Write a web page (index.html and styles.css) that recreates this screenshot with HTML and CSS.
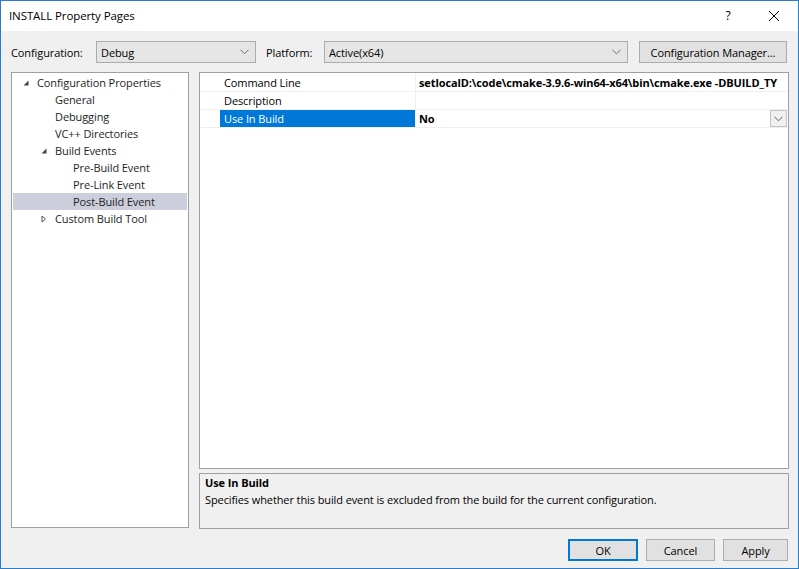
FILE: index.html
```html
<!DOCTYPE html>
<html lang="en">
<head>
    <meta charset="UTF-8">
    <title>INSTALL Property Pages</title>
    <link rel="stylesheet" href="styles.css">
</head>
<body>

<div class="window">
    <div class="titlebar">
        <span class="title">INSTALL Property Pages</span>
        <span class="help">?</span>
        <span class="close">
            <svg width="12" height="12" viewBox="0 0 12 12"><path d="M1 1L11 11M11 1L1 11" stroke="#000" stroke-width="1" fill="none"/></svg>
        </span>
    </div>

    <div class="toolbar">
        <span class="lbl cfg-lbl">Configuration:</span>
        <div class="combo combo-cfg">
            <span>Debug</span>
            <svg class="chev" width="9" height="6" viewBox="0 0 9 6"><path d="M0.5 0.8L4.5 4.8L8.5 0.8" stroke="#707070" fill="none"/></svg>
        </div>
        <span class="lbl plat-lbl">Platform:</span>
        <div class="combo combo-plat">
            <span>Active(x64)</span>
            <svg class="chev" width="9" height="6" viewBox="0 0 9 6"><path d="M0.5 0.8L4.5 4.8L8.5 0.8" stroke="#707070" fill="none"/></svg>
        </div>
        <button class="btn cfg-mgr">Configuration Manager...</button>
    </div>

    <div class="main">
        <div class="tree">
            <div class="node lvl0"><span class="tog"><svg width="6" height="6" viewBox="0 0 6 6"><path d="M5.5 0.5V5.5H0.5Z" fill="#444"/></svg></span>Configuration Properties</div>
            <div class="node lvl1"><span class="tog"></span>General</div>
            <div class="node lvl1"><span class="tog"></span>Debugging</div>
            <div class="node lvl1"><span class="tog"></span>VC++ Directories</div>
            <div class="node lvl1"><span class="tog"><svg width="6" height="6" viewBox="0 0 6 6"><path d="M5.5 0.5V5.5H0.5Z" fill="#444"/></svg></span>Build Events</div>
            <div class="node lvl2"><span class="tog"></span>Pre-Build Event</div>
            <div class="node lvl2"><span class="tog"></span>Pre-Link Event</div>
            <div class="node lvl2 selected"><span class="tog"></span>Post-Build Event</div>
            <div class="node lvl1"><span class="tog"><svg width="6" height="8" viewBox="0 0 6 8"><path d="M1 1V7L4.5 4Z" stroke="#555" fill="none"/></svg></span>Custom Build Tool</div>
        </div>

        <div class="right">
            <div class="grid">
                <div class="row">
                    <div class="gutter"></div>
                    <div class="name">Command Line</div>
                    <div class="value">setlocalD:\code\cmake-3.9.6-win64-x64\bin\cmake.exe -DBUILD_TY</div>
                </div>
                <div class="row">
                    <div class="gutter"></div>
                    <div class="name">Description</div>
                    <div class="value"></div>
                </div>
                <div class="row">
                    <div class="gutter"></div>
                    <div class="name active">Use In Build</div>
                    <div class="value">
                        <span>No</span>
                        <span class="drop">
                            <svg width="9" height="6" viewBox="0 0 9 6"><path d="M0.5 0.8L4.5 4.8L8.5 0.8" stroke="#606060" fill="none"/></svg>
                        </span>
                    </div>
                </div>
            </div>
            <div class="desc">
                <div class="desc-title">Use In Build</div>
                <div class="desc-text">Specifies whether this build event is excluded from the build for the current configuration.</div>
            </div>
        </div>
    </div>

    <div class="footer">
        <button class="btn dlg ok">OK</button>
        <button class="btn dlg cancel">Cancel</button>
        <button class="btn dlg apply">Apply</button>
    </div>
</div>

</body>
</html>
```

FILE: styles.css
```css
html, body {
    margin: 0;
    padding: 0;
}
body {
    font-family: "Open Sans", "Noto Sans", sans-serif;
    font-size: 11px;
    letter-spacing: -0.1px;
    color: #000;
    background: #f0f0f0;
}
.window {
    width: 799px;
    height: 569px;
    box-sizing: border-box;
    border: 1px solid #2b7bc6;
    background: #f0f0f0;
    display: flex;
    flex-direction: column;
}
.titlebar {
    height: 30px;
    background: #fff;
    display: flex;
    align-items: center;
    padding-left: 8px;
    padding-bottom: 1px;
    box-sizing: border-box;
}
.title {
    flex: 1;
    font-size: 11.5px;
}
.help {
    width: 46px;
    text-align: center;
    font-size: 12px;
}
.close {
    width: 46px;
    display: flex;
    justify-content: center;
    margin-right: 1px;
}
.toolbar {
    display: flex;
    align-items: center;
    margin-top: 10px;
    height: 22px;
    padding-left: 10px;
}
.lbl {
    white-space: nowrap;
}
.cfg-lbl {
    width: 85px;
}
.plat-lbl {
    width: 58px;
    margin-left: 10px;
}
.combo {
    height: 22px;
    box-sizing: border-box;
    border: 1px solid #acacac;
    background: #e5e5e5;
    display: flex;
    align-items: center;
    justify-content: space-between;
    padding: 0 6px 0 4px;
}
.combo-cfg {
    width: 160px;
}
.combo-plat {
    width: 304px;
}
.btn {
    font-family: inherit;
    font-size: 11px;
    letter-spacing: -0.1px;
    color: #000;
    background: #e1e1e1;
    border: 1px solid #adadad;
    height: 22px;
    padding: 0;
}
.cfg-mgr {
    width: 148px;
    margin-left: 11px;
}
.main {
    display: flex;
    margin-top: 9px;
    padding-left: 10px;
    gap: 10px;
}
.tree {
    width: 178px;
    height: 456px;
    box-sizing: border-box;
    border: 1px solid #a0a0a0;
    background: #fff;
    padding: 1px;
}
.node {
    height: 17px;
    display: flex;
    align-items: center;
    white-space: nowrap;
    color: #1e1e1e;
}
.node.selected {
    background: #cccedb;
}
.tog {
    width: 16px;
    display: flex;
    align-items: center;
    padding-left: 2px;
    box-sizing: border-box;
}
.lvl0 {
    padding-left: 8px;
}
.lvl1 {
    padding-left: 26px;
}
.lvl2 {
    padding-left: 44px;
}
.right {
    width: 590px;
    display: flex;
    flex-direction: column;
    gap: 4px;
}
.grid {
    height: 397px;
    box-sizing: border-box;
    border: 1px solid #a0a0a0;
    background: #fff;
}
.row {
    display: flex;
    height: 18px;
    border-bottom: 1px solid #f0f0f0;
    box-sizing: border-box;
}
.row:first-child {
    margin-top: 1px;
}
.gutter {
    width: 20px;
    flex: none;
    background: #fff;
}
.name {
    width: 196px;
    flex: none;
    border-right: 1px solid #f0f0f0;
    padding-left: 4px;
    box-sizing: border-box;
    display: flex;
    align-items: center;
    white-space: nowrap;
}
.name.active {
    background: #0078d7;
    color: #fff;
}
.value {
    flex: 1;
    display: flex;
    align-items: center;
    justify-content: space-between;
    padding-left: 3px;
    font-weight: bold;
    white-space: nowrap;
    overflow: hidden;
    min-width: 0;
}
.drop {
    width: 17px;
    height: 17px;
    box-sizing: border-box;
    border: 1px solid #c4c4c4;
    background: #f0f0f0;
    display: flex;
    align-items: center;
    justify-content: center;
    margin-right: 1px;
}
.desc {
    height: 56px;
    box-sizing: border-box;
    border: 1px solid #a0a0a0;
    background: #f0f0f0;
    padding: 0 5px;
}
.desc-title {
    font-weight: bold;
    line-height: 17px;
}
.desc-text {
    line-height: 17px;
}
.footer {
    display: flex;
    justify-content: flex-end;
    gap: 8px;
    margin-top: 10px;
    padding-right: 10px;
}
.dlg {
    height: 22px;
}
.ok {
    width: 70px;
    border: 2px solid #0078d7;
}
.cancel {
    width: 69px;
}
.apply {
    width: 65px;
}
```
